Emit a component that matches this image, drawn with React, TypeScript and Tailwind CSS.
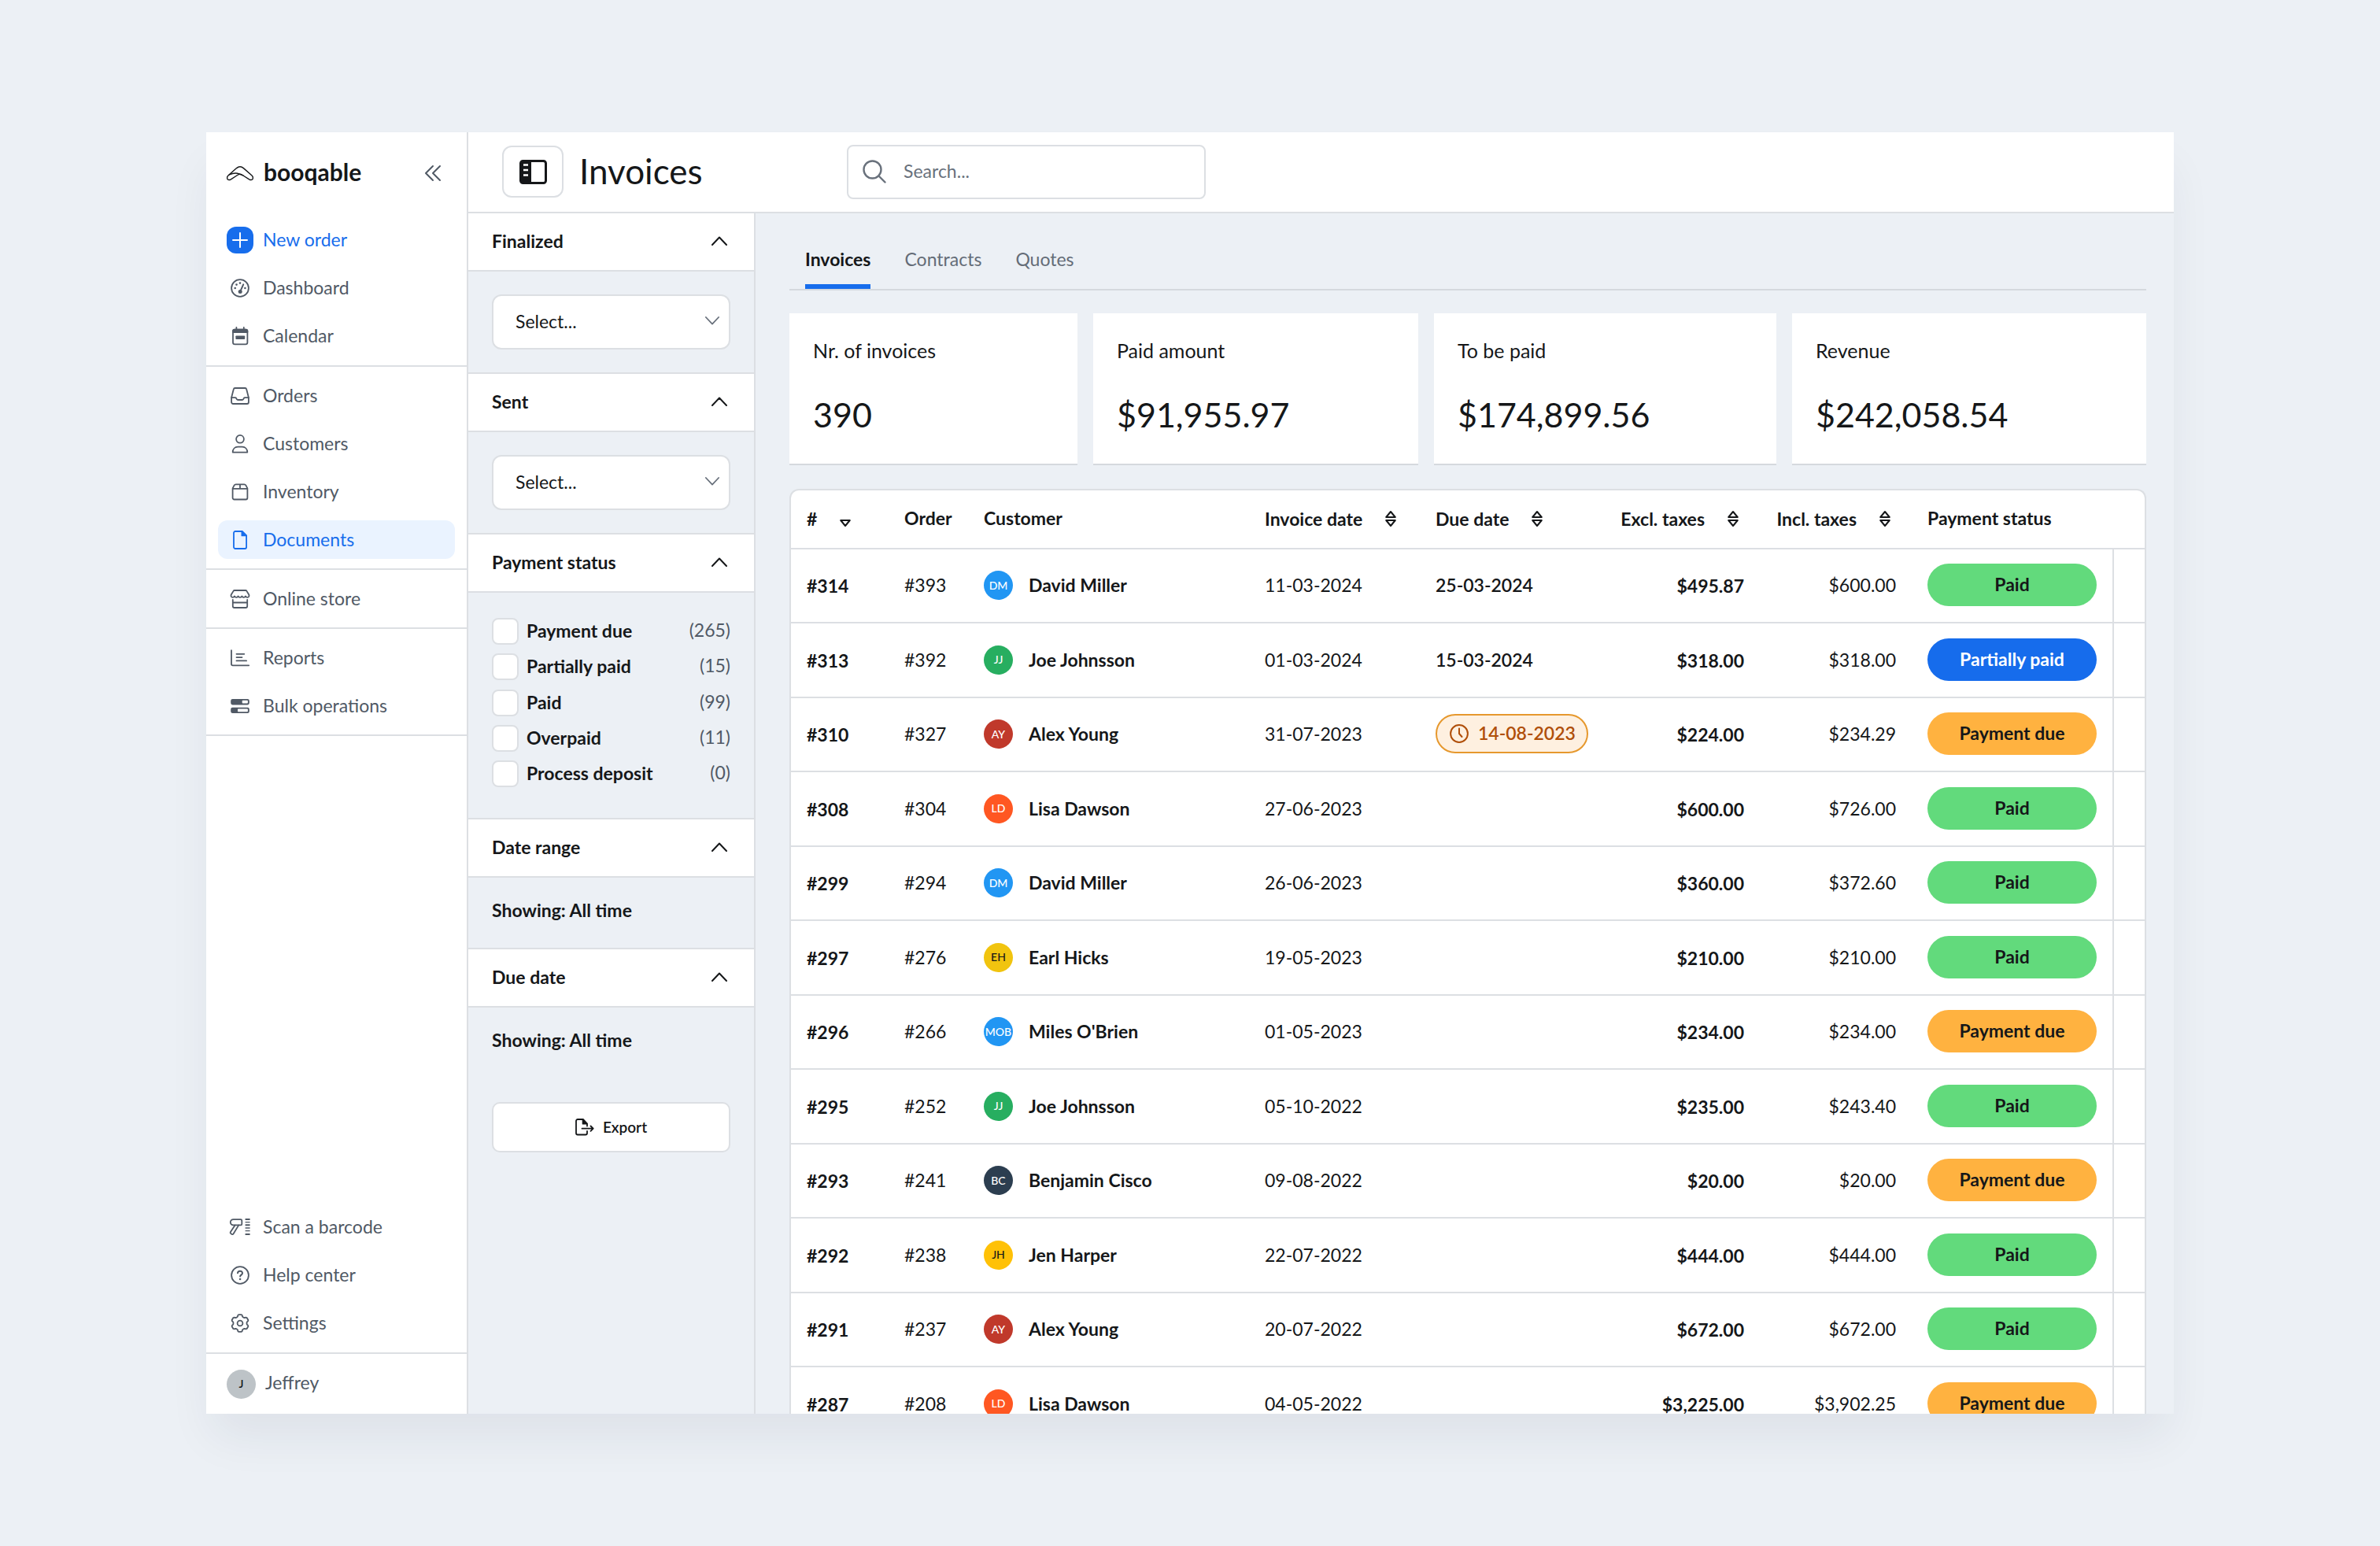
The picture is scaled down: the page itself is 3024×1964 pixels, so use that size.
import { Fragment, type ReactNode } from "react";

/* ---------- icons ---------- */

function NavSvg({ children }: { children: ReactNode }) {
  return (
    <svg
      viewBox="0 0 24 24"
      className="size-6 overflow-visible"
      fill="none"
      stroke="currentColor"
      strokeWidth="1.8"
      strokeLinecap="round"
      strokeLinejoin="round"
      aria-hidden="true"
    >
      {children}
    </svg>
  );
}

const gearPoints = Array.from({ length: 6 }, (_, k) => {
  const center = -90 + 60 * k;
  return [
    [center - 15, 10.4],
    [center - 9, 11.1],
    [center + 9, 11.1],
    [center + 15, 10.4],
    [center + 20, 8.9],
    [center + 30, 8.5],
    [center + 40, 8.9],
  ]
    .map(([deg, r]) => {
      const a = (deg * Math.PI) / 180;
      return `${(12 + r * Math.cos(a)).toFixed(2)},${(12 + r * Math.sin(a)).toFixed(2)}`;
    })
    .join(" ");
}).join(" ");

const icons: Record<string, ReactNode> = {
  dashboard: (
    <NavSvg>
      <circle cx="12" cy="12" r="10.9" />
      <path d="M12.3 16.2 16.2 7.4" strokeWidth="2" />
      <g fill="currentColor" stroke="none">
        <circle cx="12.2" cy="16.4" r="2.5" />
        <circle cx="5.7" cy="12" r="1.3" />
        <circle cx="7.5" cy="7.6" r="1.3" />
        <circle cx="12" cy="5.6" r="1.3" />
        <circle cx="18.4" cy="12" r="1.3" />
      </g>
    </NavSvg>
  ),
  calendar: (
    <NavSvg>
      <rect x="3" y="3.6" width="18.4" height="18.8" rx="2.4" />
      <path d="M3 7V5.6a2 2 0 0 1 2-2h14.4a2 2 0 0 1 2 2V7Z" fill="currentColor" />
      <path d="M7.4.9V3M16.8.9V3" />
      <rect x="6.4" y="11.4" width="11.8" height="4.6" rx=".8" fill="currentColor" stroke="none" />
    </NavSvg>
  ),
  orders: (
    <NavSvg>
      <path d="M5.6 2h12.8c.9 0 1.6.6 1.8 1.5L22.9 14v6a2 2 0 0 1-2 2H3.1a2 2 0 0 1-2-2v-6L3.8 3.500C4 2.600 4.700 2 5.600 2Z" />
      <path d="M1.200 14.200h4.600c.7 0 1.200.3 1.500.9l.5 1c.3.600.8.900 1.500.900h5.400c.7 0 1.200-.3 1.500-.9l.5-1c.3-.6.8-.9 1.500-.9h4.600" />
    </NavSvg>
  ),
  customers: (
    <NavSvg>
      <circle cx="12" cy="5.800" r="4.900" />
      <path d="M2.700 22.600c0-4.200 2.800-7 6.500-7h5.600c3.700 0 6.500 2.800 6.500 7Z" />
    </NavSvg>
  ),
  inventory: (
    <NavSvg>
      <path d="M6.600 2.300h10.800c.8 0 1.500.4 1.900 1.100l2.100 4V19.500a2 2 0 0 1-2 2H4.600a2 2 0 0 1-2-2V7.400l2.100-4c.4-.7 1.100-1.100 1.900-1.100ZM2.900 7.900h18.200M12 2.300v5.600" />
    </NavSvg>
  ),
  documents: (
    <NavSvg>
      <path d="M6 1h8.700l5.400 5.500V21a2 2 0 0 1-2 2H6a2 2 0 0 1-2-2V3a2 2 0 0 1 2-2Z" />
      <path d="M14.400 1.200v5.200h5.500Z" fill="currentColor" />
    </NavSvg>
  ),
  store: (
    <NavSvg>
      <path d="M4.900 1h14.200c.5 0 .9.200 1.200.600l3 4.900c.6 1.800-.2 3.400-1.900 3.400-1.200 0-2-.5-2.400-1.500-.5 1-1.300 1.500-2.300 1.500s-1.900-.5-2.300-1.500c-.5 1-1.400 1.500-2.400 1.500s-1.900-.5-2.400-1.500c-.4 1-1.300 1.500-2.300 1.500s-1.800-.5-2.300-1.500C4.600 9.400 3.800 9.900 2.600 9.900.9 9.900.100 8.300.700 6.500l3-4.900c.3-.4.700-.6 1.200-.6Z" />
      <path d="M2.800 13v8a2 2 0 0 0 2 2h14.400a2 2 0 0 0 2-2v-8M2.800 16.500h18.400" />
    </NavSvg>
  ),
  reports: (
    <NavSvg>
      <path d="M1 2.200v17.300c0 1.100.7 1.800 1.800 1.800H23.200M7.500 6.800h9.800M7.500 11.100h7M7.500 15.400h12.600" />
    </NavSvg>
  ),
  bulk: (
    <svg viewBox="0 0 24 24" className="size-6" fill="currentColor" fillRule="evenodd" aria-hidden="true">
      <path d="M2.500 3h19A2.300 2.300 0 0 1 23.800 5.300v2.800a2.300 2.300 0 0 1-2.300 2.300h-19A2.300 2.300 0 0 1 .2 8.100V5.300A2.300 2.300 0 0 1 2.500 3Zm13 1.800a.8.800 0 0 0-.8.800v2.200c0 .4.400.8.800.8h5.600c.4 0 .8-.4.800-.8V5.600a.8.800 0 0 0-.8-.8Z" />
      <path d="M2.500 13.700h19a2.300 2.300 0 0 1 2.300 2.300v2.800a2.300 2.300 0 0 1-2.300 2.300h-19A2.300 2.300 0 0 1 .2 18.800V16a2.300 2.300 0 0 1 2.300-2.300Zm7.300 1.800a.8.800 0 0 0-.8.800v2.200c0 .4.400.8.800.8h11.300c.4 0 .8-.4.800-.8v-2.200a.8.800 0 0 0-.8-.8Z" />
    </svg>
  ),
  barcode: (
    <NavSvg>
      <path d="M3.600 2.200h9.200c.9 0 1.500.6 1.500 1.500v4.200c0 .9-.6 1.500-1.500 1.500H3.800C1.300 9.400-.2 8 -.2 5.800s1.500-3.600 3.800-3.600Z" />
      <path d="M5.600 9.400-.2 18.300c-.4.700-.2 1.300.4 1.700l1.500.9c.700.400 1.400.200 1.800-.4L10.300 9.400" />
      <path d="M18.600 2h6M18.600 9.300h6M18.600 21.100h6" strokeWidth="2" strokeLinecap="butt" />
      <path d="M18.600 5.600h6M18.600 13h6M18.600 16.700h6" strokeWidth="1.300" strokeLinecap="butt" />
    </NavSvg>
  ),
  help: (
    <NavSvg>
      <circle cx="12" cy="12" r="10.900" />
      <path d="M9 9.300a3 2.700 0 0 1 6 .2c0 2-2.900 2.200-2.900 4.100" strokeWidth="2" />
      <circle cx="12.100" cy="17" r="1.300" fill="currentColor" stroke="none" />
    </NavSvg>
  ),
  settings: (
    <NavSvg>
      <polygon points={gearPoints} />
      <circle cx="12" cy="12" r="3.400" />
    </NavSvg>
  ),
};

function Chevron({ className }: { className: string }) {
  return (
    <svg viewBox="0 0 20 12" className={className} fill="none" stroke="currentColor" strokeWidth="2" strokeLinecap="round" strokeLinejoin="round" aria-hidden="true">
      <path d="M1 11 10 1.500 19 11" />
    </svg>
  );
}

function SortIcon({ down = false }: { down?: boolean }) {
  return (
    <svg viewBox="0 0 16 22" className="h-[22px] w-4" fill="none" stroke="currentColor" strokeWidth="2" strokeLinejoin="round" aria-hidden="true">
      {!down && <path d="M8 2 13.800 9H2.200Z" />}
      <path d="M8 20 13.800 13H2.200Z" />
    </svg>
  );
}

/* ---------- sidebar ---------- */

const navGroups = [
  [
    { label: "Dashboard", icon: "dashboard" },
    { label: "Calendar", icon: "calendar" },
  ],
  [
    { label: "Orders", icon: "orders" },
    { label: "Customers", icon: "customers" },
    { label: "Inventory", icon: "inventory" },
    { label: "Documents", icon: "documents" },
  ],
  [{ label: "Online store", icon: "store" }],
  [
    { label: "Reports", icon: "reports" },
    { label: "Bulk operations", icon: "bulk" },
  ],
];

const supportLinks = [
  { label: "Scan a barcode", icon: "barcode" },
  { label: "Help center", icon: "help" },
  { label: "Settings", icon: "settings" },
];

function NavItem({ label, icon }: { label: string; icon: string }) {
  const active = label === "Documents";
  return (
    <a
      href="#"
      aria-current={active ? "page" : undefined}
      className={
        active
          ? "flex h-[49px] items-center gap-3 rounded-xl bg-[#eaf3ff] pl-[11px] text-[#176dec]"
          : "flex h-[49px] items-center gap-3 rounded-xl pl-[11px]"
      }
    >
      <span className="flex w-[34px] justify-center">{icons[icon]}</span>
      <span className="pb-0.5">{label}</span>
    </a>
  );
}

function Sidebar() {
  return (
    <aside className="flex w-[333px] shrink-0 flex-col border-r-2 border-[#dcdfe3] bg-white text-[#505965]">
      <div className="flex h-28 items-center justify-between pr-8 pb-2 pl-[26px]">
        <a href="#" className="flex items-center gap-[13px] text-[30px] font-bold text-[#151719]">
          <svg viewBox="0 0 34 19" className="h-[19px] w-[34px]" fill="none" stroke="currentColor" strokeWidth="1.400" strokeLinecap="round" strokeLinejoin="round" aria-hidden="true">
            <path d="M12.600 2.600C14 1.400 15.400.8 17 .8s3 .6 4.400 1.800l10.400 9.200c1.700 1.700 2 3.600 1 4.900-1 1.100-2.600 1-4.200.1L19.400 11c-1.700-1-3.300-1-5 0L5.400 16.800c-1.600.9-3.200 1-4.200-.1-1-1.300-.7-3.200 1-4.900Z" />
            <path d="M3.400 10.900c3.600-1.600 8.800-2.500 12.400-1.100l5 2" />
          </svg>
          <span className="pb-1">booqable</span>
        </a>
        <button type="button" aria-label="Collapse sidebar">
          <svg viewBox="0 0 22 22" className="size-[22px]" fill="none" stroke="currentColor" strokeWidth="2" strokeLinecap="round" strokeLinejoin="round" aria-hidden="true">
            <path d="M11 2 2 11l9 9M20 2l-9 9 9 9" />
          </svg>
        </button>
      </div>
      <nav aria-label="Main">
        {navGroups.map((group, i) => (
          <div
            key={i}
            className={
              i === 0
                ? "flex flex-col gap-3 border-b-2 border-[#dcdfe3] px-[15px] pb-[13px]"
                : "flex flex-col gap-3 border-b-2 border-[#dcdfe3] px-[15px] py-3"
            }
          >
            {i === 0 && (
              <a href="#" className="flex h-[49px] items-center gap-3 pl-[11px] text-[#176dec]">
                <span className="flex size-[34px] items-center justify-center rounded-xl bg-[#176dec] text-white">
                  <svg viewBox="0 0 20 20" className="size-5" stroke="currentColor" strokeWidth="2" strokeLinecap="round" aria-hidden="true">
                    <path d="M10 1v18M1 10h18" />
                  </svg>
                </span>
                <span className="pb-0.5">New order</span>
              </a>
            )}
            {group.map((item) => (
              <NavItem key={item.label} {...item} />
            ))}
          </div>
        ))}
      </nav>
      <div className="mt-auto flex flex-col gap-3 border-b-2 border-[#dcdfe3] px-[15px] pb-[13px]">
        {supportLinks.map((item) => (
          <NavItem key={item.label} {...item} />
        ))}
      </div>
      <a href="#" className="flex h-[76px] shrink-0 items-center gap-3 pl-[26px]">
        <span className="flex size-[37px] items-center justify-center rounded-full bg-[#bdc3c7] text-sm font-semibold text-[#151719]">J</span>
        <span className="pb-1">Jeffrey</span>
      </a>
    </aside>
  );
}

/* ---------- filters ---------- */

function FilterHeader({ title }: { title: string }) {
  return (
    <h2 className="border-b-2 border-[#dcdfe3] bg-white">
      <button type="button" className="flex h-[72px] w-full items-center justify-between pr-[34px] pb-0.5 pl-[30px] font-bold">
        {title}
        <Chevron className="h-3 w-5" />
      </button>
    </h2>
  );
}

function SelectFilter({ title }: { title: string }) {
  return (
    <section>
      <FilterHeader title={title} />
      <div className="border-b-2 border-[#dcdfe3] px-[30px] pt-[29px] pb-[29px]">
        <div className="relative">
          <select
            aria-label={title}
            className="block h-[70px] w-full appearance-none rounded-xl border-2 border-[#dcdfe3] bg-white pb-0.5 pl-7 text-[#151719]"
          >
            <option>Select...</option>
          </select>
          <Chevron className="pointer-events-none absolute top-7 right-[14px] h-[11px] w-[18px] rotate-180 text-[#69717c]" />
        </div>
      </div>
    </section>
  );
}

const statuses = [
  ["Payment due", 265],
  ["Partially paid", 15],
  ["Paid", 99],
  ["Overpaid", 11],
  ["Process deposit", 0],
] as const;

function Filters() {
  return (
    <div className="w-[365px] shrink-0 border-r-2 border-[#dcdfe3]">
      <SelectFilter title="Finalized" />
      <SelectFilter title="Sent" />
      <section>
        <FilterHeader title="Payment status" />
        <div className="border-b-2 border-[#dcdfe3] px-[30px] pt-8 pb-[39px]">
          <ul className="flex h-[215px] flex-col justify-between">
            {statuses.map(([label, count]) => (
              <li key={label} className="flex items-center justify-between">
                <label className="flex items-center gap-[10px] font-bold">
                  <input type="checkbox" className="size-[34px] appearance-none rounded-lg border-2 border-[#dcdfe3] bg-white checked:bg-[#176dec]" />
                  <span className="pb-0.5">{label}</span>
                </label>
                <span className="pb-1 text-[#505965]">({count})</span>
              </li>
            ))}
          </ul>
        </div>
      </section>
      <section>
        <FilterHeader title="Date range" />
        <p className="border-b-2 border-[#dcdfe3] px-[30px] pt-6 pb-[31px] leading-[34px] font-bold">Showing: All time</p>
      </section>
      <section>
        <FilterHeader title="Due date" />
        <p className="px-[30px] pt-6 leading-[34px] font-bold">Showing: All time</p>
      </section>
      <div className="px-[30px] pt-[62px]">
        <button type="button" className="flex h-16 w-full items-center justify-center gap-[11px] rounded-[10px] border-2 border-[#dcdfe3] bg-white text-[19px] font-semibold">
          <svg viewBox="0 0 24 22" className="h-[22px] w-6" fill="none" stroke="currentColor" strokeWidth="1.800" strokeLinecap="round" strokeLinejoin="round" aria-hidden="true">
            <path d="M15 9.500V6.500L10 1H3a2 2 0 0 0-2 2v15.500a2 2 0 0 0 2 2h10a2 2 0 0 0 2-2V16M8.500 12.700h14M19.500 9.500l3.200 3.200-3.200 3.200" />
            <path d="M9.600 1.200v5.500h5.200Z" fill="currentColor" />
          </svg>
          Export
        </button>
      </div>
    </div>
  );
}

/* ---------- main ---------- */

const stats = [
  ["Nr. of invoices", "390"],
  ["Paid amount", "$91,955.97"],
  ["To be paid", "$174,899.56"],
  ["Revenue", "$242,058.54"],
];

type Status = "Paid" | "Partially paid" | "Payment due";

const pillStyles: Record<Status, string> = {
  Paid: "bg-[#62da7c]",
  "Partially paid": "bg-[#166cec] text-white",
  "Payment due": "bg-[#ffb240]",
};

const customers: Record<string, [string, string]> = {
  "David Miller": ["DM", "bg-[#2196f3] text-white"],
  "Joe Johnsson": ["JJ", "bg-[#27ae60] text-white"],
  "Alex Young": ["AY", "bg-[#c0392b] text-white"],
  "Lisa Dawson": ["LD", "bg-[#ff5722] text-white"],
  "Earl Hicks": ["EH", "bg-[#f1c40f]"],
  "Miles O'Brien": ["MOB", "bg-[#2196f3] text-white"],
  "Benjamin Cisco": ["BC", "bg-[#2c3e50] text-white"],
  "Jen Harper": ["JH", "bg-[#ffc107]"],
};

const invoices: [string, string, string, string, string, string, string, Status][] = [
  ["#314", "#393", "David Miller", "11-03-2024", "25-03-2024", "$495.87", "$600.00", "Paid"],
  ["#313", "#392", "Joe Johnsson", "01-03-2024", "15-03-2024", "$318.00", "$318.00", "Partially paid"],
  ["#310", "#327", "Alex Young", "31-07-2023", "14-08-2023", "$224.00", "$234.29", "Payment due"],
  ["#308", "#304", "Lisa Dawson", "27-06-2023", "", "$600.00", "$726.00", "Paid"],
  ["#299", "#294", "David Miller", "26-06-2023", "", "$360.00", "$372.60", "Paid"],
  ["#297", "#276", "Earl Hicks", "19-05-2023", "", "$210.00", "$210.00", "Paid"],
  ["#296", "#266", "Miles O'Brien", "01-05-2023", "", "$234.00", "$234.00", "Payment due"],
  ["#295", "#252", "Joe Johnsson", "05-10-2022", "", "$235.00", "$243.40", "Paid"],
  ["#293", "#241", "Benjamin Cisco", "09-08-2022", "", "$20.00", "$20.00", "Payment due"],
  ["#292", "#238", "Jen Harper", "22-07-2022", "", "$444.00", "$444.00", "Paid"],
  ["#291", "#237", "Alex Young", "20-07-2022", "", "$672.00", "$672.00", "Paid"],
  ["#287", "#208", "Lisa Dawson", "04-05-2022", "", "$3,225.00", "$3,902.25", "Payment due"],
];

function DueDate({ date, overdue }: { date: string; overdue: boolean }) {
  if (!overdue) return <Fragment>{date}</Fragment>;
  return (
    <span className="inline-flex h-[50px] w-[194px] items-center gap-3 rounded-full border-2 border-[#e6982d] bg-[#fef0e0] pl-4 align-middle text-[#b04f0a]">
      <svg viewBox="0 0 24 24" className="size-6" fill="none" stroke="currentColor" strokeWidth="2" strokeLinecap="round" strokeLinejoin="round" aria-hidden="true">
        <circle cx="12" cy="12" r="10.900" />
        <path d="M12 5.500V12l3.500 4" />
      </svg>
      <span className="pb-0.5">{date}</span>
    </span>
  );
}

function SortHeader({ label, down }: { label: string; down?: boolean }) {
  return (
    <button type="button" className="inline-flex items-center gap-7 align-middle font-bold">
      {label}
      <SortIcon down={down} />
    </button>
  );
}

function InvoiceTable() {
  return (
    <div className="mt-[30px] rounded-t-xl border-2 border-b-0 border-[#dcdfe3] bg-white">
      <table className="w-full table-fixed border-collapse">
        <colgroup>
          <col className="w-[124px]" />
          <col className="w-[101px]" />
          <col />
          <col className="w-[217px]" />
          <col className="w-[224px]" />
          <col className="w-[208px]" />
          <col className="w-[193px]" />
          <col className="w-[256px]" />
          <col className="w-10" />
        </colgroup>
        <thead>
          <tr className="h-[74px] border-b-2 border-[#dcdfe3] text-left whitespace-nowrap">
            <th className="pb-1 pl-5"><SortHeader label="#" down /></th>
            <th className="pb-1 pl-5">Order</th>
            <th className="pb-1 pl-5">Customer</th>
            <th className="pb-1 pl-5"><SortHeader label="Invoice date" /></th>
            <th className="pb-1 pl-5"><SortHeader label="Due date" /></th>
            <th className="pr-[26px] pb-1 text-right"><SortHeader label="Excl. taxes" /></th>
            <th className="pr-[26px] pb-1 text-right"><SortHeader label="Incl. taxes" /></th>
            <th className="pb-1 pl-5">Payment status</th>
            <td />
          </tr>
        </thead>
        <tbody>
          {invoices.map(([id, order, customer, date, due, excl, incl, status]) => {
            const [initials, tint] = customers[customer];
            return (
              <tr key={id} className="h-[94px] border-b-2 border-[#dcdfe3] even:h-[95px]">
                <td className="pl-5 font-bold">{id}</td>
                <td className="pb-0.5 pl-5">{order}</td>
                <td className="pb-px pl-5 font-bold">
                  <div className="flex items-center gap-5">
                    <span className={`flex size-[37px] items-center justify-center rounded-full text-sm font-medium ${tint}`}>{initials}</span>
                    <span className="pb-px">{customer}</span>
                  </div>
                </td>
                <td className="pb-0.5 pl-5">{date}</td>
                <td className="pb-0.5 pl-5 font-semibold">
                  <DueDate date={due} overdue={id === "#310"} />
                </td>
                <td className="pr-5 text-right font-bold">{excl}</td>
                <td className="pr-5 pb-0.5 text-right">{incl}</td>
                <td className="px-5 pb-0.5">
                  <span className={`flex h-[54px] items-center justify-center rounded-full pb-0.5 font-bold ${pillStyles[status]}`}>{status}</span>
                </td>
                <td className="border-l-2 border-[#dcdfe3]" />
              </tr>
            );
          })}
        </tbody>
      </table>
    </div>
  );
}

export default function App() {
  return (
    <div className="h-screen overflow-hidden bg-[#ecf0f5] px-[262px] py-[168px] font-['Lato',sans-serif] text-[23px] leading-[30px] text-[#151719]">
      <div className="flex h-full shadow-[0_36px_56px_-8px_rgba(30,40,70,0.07)]">
        <Sidebar />
        <div className="flex min-w-0 grow flex-col">
          <header className="flex h-[103px] shrink-0 items-center border-b-2 border-[#dcdfe3] bg-white pb-px pl-[43px]">
            <button type="button" aria-label="Toggle filters" className="flex h-[66px] w-[78px] items-center justify-center rounded-xl border-2 border-[#dcdfe3]">
              <svg viewBox="0 0 35 31" className="h-[31px] w-[35px]" aria-hidden="true">
                <rect x="1.500" y="1.500" width="32" height="28" rx="3" fill="none" stroke="currentColor" strokeWidth="3" />
                <path d="M2 2h13v27H2Z" fill="currentColor" />
                <path d="M5 6.500h6M5 13h6M5 19.500h6" stroke="white" strokeWidth="2.600" />
              </svg>
            </button>
            <h1 className="ml-5 w-[340px] pb-0.5 text-[44px] leading-[52px]">Invoices</h1>
            <label className="flex h-[69px] w-[456px] items-center gap-[22px] rounded-lg border-2 border-[#dcdfe3] pl-[18px] text-[#69717c]">
              <svg viewBox="0 0 30 30" className="size-[30px]" fill="none" stroke="currentColor" strokeWidth="2.400" strokeLinecap="round" aria-hidden="true">
                <circle cx="12.500" cy="12.500" r="11" />
                <path d="m20.500 20.500 8 8" />
              </svg>
              <input type="search" aria-label="Search" placeholder="Search..." className="min-w-0 grow pb-0.5 outline-none placeholder:text-[#69717c]" />
            </label>
          </header>
          <div className="flex min-h-0 grow overflow-hidden bg-[#ecf0f5]">
            <Filters />
            <main className="min-w-0 grow pr-[35px] pl-[43px]">
              <nav aria-label="Documents" className="flex h-[98px] items-end gap-[43px] border-b-2 border-[#d5d9de] pl-5 text-[#646c77]">
                <a href="#" aria-current="page" className="border-b-[6px] border-[#176dec] pb-[17px] font-bold text-[#151719]">Invoices</a>
                <a href="#" className="pb-[23px]">Contracts</a>
                <a href="#" className="pb-[23px]">Quotes</a>
              </nav>
              <dl className="mt-[29px] grid grid-cols-[366fr_413fr_435fr_450fr] gap-5">
                {stats.map(([label, value]) => (
                  <div key={label} className="border-b-2 border-[#d5d9de] bg-white px-[30px] pt-[31px] pb-9">
                    <dt className="text-[25px] leading-8">{label}</dt>
                    <dd className="mt-10 text-[43px] leading-[52px]">{value}</dd>
                  </div>
                ))}
              </dl>
              <InvoiceTable />
            </main>
          </div>
        </div>
      </div>
    </div>
  );
}
